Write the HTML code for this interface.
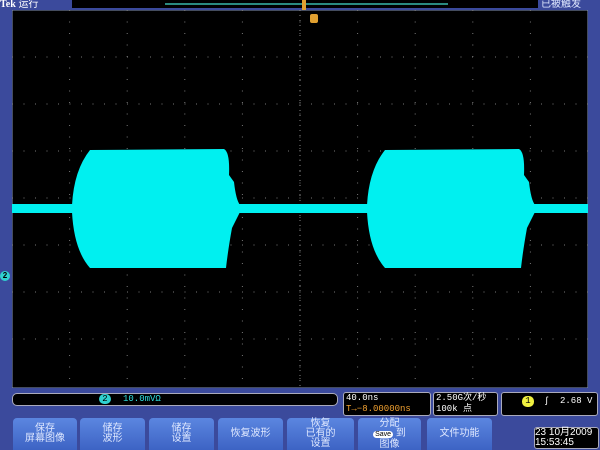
<!DOCTYPE html>
<html><head><meta charset="utf-8"><style>
body{margin:0;width:600px;height:450px;background:#3b4a9c;position:relative;overflow:hidden;font-family:"Liberation Sans","Noto Sans CJK SC",sans-serif;}
.a{position:absolute}
.btn{position:absolute;top:418px;height:32px;background:linear-gradient(#5b86e0,#3d63c4);border-radius:4px 4px 0 0;color:#dfe8ff;font-size:10px;line-height:10px;text-align:center;display:flex;align-items:center;justify-content:center;flex-direction:column}
.box{position:absolute;background:#000;border:1px solid #aab;border-radius:3px;color:#fff;font-size:9px;font-family:"Liberation Mono","Noto Sans CJK SC",monospace;white-space:nowrap}
</style></head><body>
<div class="a" style="left:0;top:0;color:#fff;font-size:10px;line-height:10px"><b style="font-family:'Liberation Serif'">Tek</b> 运行</div>
<div class="a" style="left:72px;top:0;width:466px;height:8px;background:#000"></div>
<div class="a" style="left:165px;top:3px;width:283px;height:2px;background:#2a8a80"></div>
<div class="a" style="left:302px;top:0;width:4px;height:10px;background:#e0a030"></div>
<div class="a" style="left:541px;top:0;color:#dfe8ff;font-size:10px;line-height:10px">已被触发</div>
<svg class="a" style="left:12px;top:10px" width="576" height="378">
<rect width="576" height="378" fill="#000" stroke="#8899bb" stroke-width="1"/>
<g stroke="#777" stroke-width="1" stroke-dasharray="1 10.5">
<line x1="57.6" y1="0" x2="57.6" y2="378"/><line x1="115.2" y1="0" x2="115.2" y2="378"/><line x1="172.8" y1="0" x2="172.8" y2="378"/><line x1="230.4" y1="0" x2="230.4" y2="378"/><line x1="288" y1="0" x2="288" y2="378"/><line x1="345.6" y1="0" x2="345.6" y2="378"/><line x1="403.2" y1="0" x2="403.2" y2="378"/><line x1="460.8" y1="0" x2="460.8" y2="378"/><line x1="518.4" y1="0" x2="518.4" y2="378"/>
<line x1="0" y1="47" x2="576" y2="47"/><line x1="0" y1="94" x2="576" y2="94"/><line x1="0" y1="141" x2="576" y2="141"/><line x1="0" y1="188" x2="576" y2="188"/><line x1="0" y1="235" x2="576" y2="235"/><line x1="0" y1="282" x2="576" y2="282"/><line x1="0" y1="329" x2="576" y2="329"/>
</g>
<line x1="288" y1="0" x2="288" y2="378" stroke="#888" stroke-dasharray="1 4"/>
<rect x="298" y="4" width="8" height="9" rx="2" fill="#e0a030"/>
<g fill="#00f0f0">
<rect x="0" y="194" width="576" height="9"/>
<path d="M60 195 Q62 160 78 140 L212 139 Q218 142 217 165 L222 172 Q224 190 228 195 L228 202 Q224 210 220 218 Q216 240 214 258 L78 258 Q62 240 60 202Z"/>
<path d="M355 195 Q357 160 373 140 L507 139 Q513 142 512 165 L517 172 Q519 190 523 195 L523 202 Q519 210 515 218 Q511 240 509 258 L373 258 Q357 240 355 202Z"/>
</g>
</svg>
<div class="a" style="left:0;top:271px;width:10px;height:10px;border-radius:5px;background:#30d0d0;font-size:8px;line-height:10px;text-align:center;font-weight:bold">2</div>
<div class="box" style="left:12px;top:393px;width:324px;height:11px;border-radius:5px"><span style="position:absolute;left:86px;top:0;width:12px;height:10px;border-radius:5px;background:#30d0d0;color:#000;font-size:9px;text-align:center;line-height:10px">2</span><span style="position:absolute;left:110px;top:0;color:#30e0e0">10.0mVΩ</span></div>
<div class="box" style="left:343px;top:392px;width:84px;height:22px;line-height:11px;padding-left:2px">40.0ns<br><span style="color:#f0a030">T→−8.00000ns</span></div>
<div class="box" style="left:433px;top:392px;width:61px;height:22px;line-height:11px;padding-left:2px">2.50G次/秒<br>100k 点</div>
<div class="box" style="left:501px;top:392px;width:95px;height:22px;line-height:16px"><span style="position:absolute;left:20px;top:3px;width:12px;height:11px;border-radius:5px;background:#f0f040;color:#000;font-size:9px;text-align:center;line-height:11px">1</span><span style="position:absolute;left:42px">ʃ</span><span style="position:absolute;left:58px">2.68 V</span></div>
<div class="btn" style="left:13px;width:64px">保存<br>屏幕图像</div>
<div class="btn" style="left:80px;width:65px">储存<br>波形</div>
<div class="btn" style="left:149px;width:65px">储存<br>设置</div>
<div class="btn" style="left:218px;width:65px">恢复波形</div>
<div class="btn" style="left:287px;width:67px">恢复<br>已有的<br>设置</div>
<div class="btn" style="left:358px;width:63px">分配<br><span><span style="background:#fff;color:#000;border-radius:4px;font-size:7px;padding:0 2px">Save</span> 到</span>图像</div>
<div class="btn" style="left:427px;width:65px">文件功能</div>
<div class="box" style="left:534px;top:427px;width:63px;height:20px;line-height:10px;font-size:10px;font-family:'Liberation Sans','Noto Sans CJK SC',sans-serif">23 10月2009<br>15:53:45</div>
</body></html>
